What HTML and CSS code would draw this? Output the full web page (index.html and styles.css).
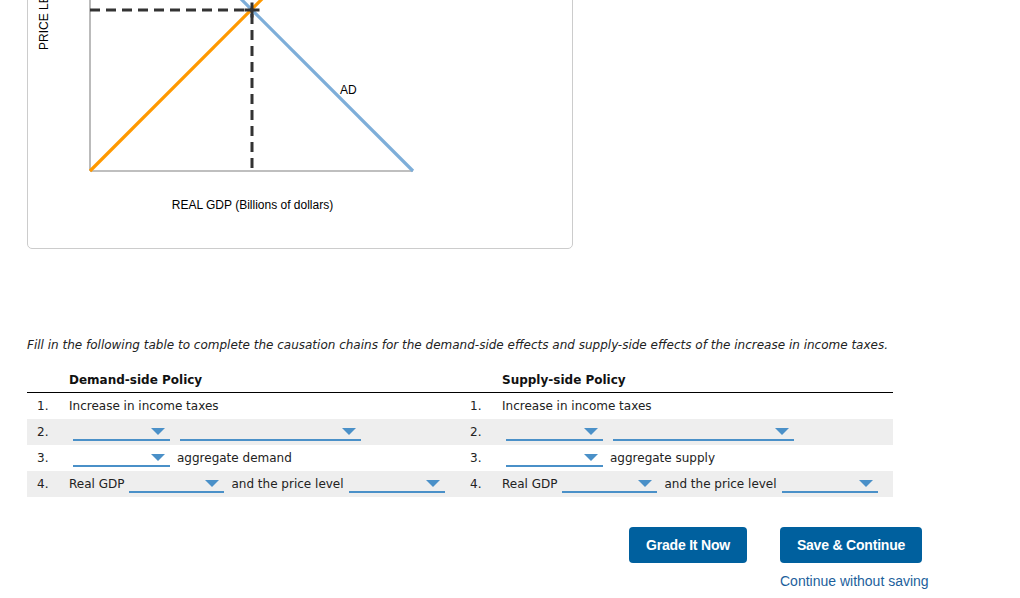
FILE: index.html
```html
<!DOCTYPE html>
<html lang="en">
<head>
<meta charset="utf-8">
<title>Causation chains</title>
<link rel="stylesheet" href="styles.css">
</head>
<body>
<div class="page">
  <div class="graph-card">
    <svg class="graph" width="544" height="287" viewBox="28 -39 544 287">
      <line class="axis" x1="90" y1="-39" x2="90" y2="171"/>
      <line class="axis" x1="90" y1="171" x2="413" y2="171"/>
      <line class="ad" x1="413" y1="171" x2="203" y2="-39"/>
      <line class="as" x1="90" y1="171" x2="300" y2="-39"/>
      <line class="dash" x1="90" y1="10" x2="252" y2="10"/>
      <line class="dash" x1="252" y1="14" x2="252" y2="171"/>
      <path class="marker" d="M244.5 10 H259.5 M252 2.5 V17.5"/>
      <text class="label" x="340" y="94">AD</text>
      <text class="label" x="252.5" y="209" text-anchor="middle">REAL GDP (Billions of dollars)</text>
      <text class="label" transform="translate(48,50) rotate(-90)">PRICE LEVEL</text>
    </svg>
  </div>

  <p class="instructions">Fill in the following table to complete the causation chains for the demand-side effects and supply-side effects of the increase in income taxes.</p>

  <table class="chains">
    <thead>
      <tr>
        <th class="num"></th>
        <th class="body">Demand-side Policy</th>
        <th class="num"></th>
        <th class="body">Supply-side Policy</th>
      </tr>
    </thead>
    <tbody>
      <tr>
        <td class="num">1.</td>
        <td class="body"><div class="cell">Increase in income taxes</div></td>
        <td class="num">1.</td>
        <td class="body"><div class="cell">Increase in income taxes</div></td>
      </tr>
      <tr class="alt">
        <td class="num">2.</td>
        <td class="body"><div class="cell"><span class="select w97 lead"></span><span class="select w181"></span></div></td>
        <td class="num">2.</td>
        <td class="body"><div class="cell"><span class="select w97 lead"></span><span class="select w181"></span></div></td>
      </tr>
      <tr>
        <td class="num">3.</td>
        <td class="body"><div class="cell"><span class="select w97 lead"></span><span class="txt after">aggregate demand</span></div></td>
        <td class="num">3.</td>
        <td class="body"><div class="cell"><span class="select w97 lead"></span><span class="txt after">aggregate supply</span></div></td>
      </tr>
      <tr class="alt">
        <td class="num">4.</td>
        <td class="body"><div class="cell"><span class="txt">Real GDP</span><span class="select w95 mid"></span><span class="txt after">and the price level</span><span class="select w96 mid"></span></div></td>
        <td class="num">4.</td>
        <td class="body"><div class="cell"><span class="txt">Real GDP</span><span class="select w95 mid"></span><span class="txt after">and the price level</span><span class="select w96 mid"></span></div></td>
      </tr>
    </tbody>
  </table>

  <div class="actions">
    <button class="btn" type="button">Grade It Now</button>
    <div class="save-group">
      <button class="btn btn-wide" type="button">Save &amp; Continue</button>
      <a class="skip" href="#">Continue without saving</a>
    </div>
  </div>
</div>
</body>
</html>
```

FILE: styles.css
```css
html, body {
  margin: 0;
  padding: 0;
  background: #ffffff;
  overflow: hidden;
}

body {
  font-family: "DejaVu Sans", Verdana, sans-serif;
  color: #222222;
}

.page {
  padding: 0 0 0 27px;
  width: 993px;
}

.graph-card {
  width: 544px;
  margin-top: -40px;
  border: 1px solid #cccccc;
  border-radius: 5px;
  background: #ffffff;
}

.graph {
  display: block;
}

.axis {
  stroke: #aaaaaa;
  stroke-width: 1.6;
}

.as {
  stroke: #ff9900;
  stroke-width: 3.2;
}

.ad {
  stroke: #7eaed9;
  stroke-width: 3.2;
}

.dash {
  stroke: #333333;
  stroke-width: 3;
  stroke-dasharray: 10 6;
}

.marker {
  stroke: #333333;
  stroke-width: 3;
  fill: none;
}

.label {
  font-family: "Liberation Sans", Arial, sans-serif;
  font-size: 12px;
  fill: #000000;
}

.instructions {
  margin: 88px 0 0 0;
  font-size: 12px;
  line-height: 16px;
  font-style: italic;
  color: #222222;
}

.chains {
  margin-top: 15px;
  width: 866px;
  border-collapse: collapse;
  border-spacing: 0;
  font-size: 12px;
  table-layout: fixed;
}

.chains th {
  text-align: left;
  font-weight: bold;
  height: 24px;
  padding: 0;
  line-height: 16px;
  border-bottom: 1px solid #000000;
  color: #111111;
}

.chains td {
  padding: 0;
  height: 26px;
}

.chains .num {
  width: 42px;
  padding-left: 10px;
  box-sizing: border-box;
}

.chains .body {
  width: 391px;
}

.chains .alt td {
  background: #eeeeee;
}

.cell {
  display: flex;
  align-items: center;
  height: 26px;
}

.txt {
  white-space: nowrap;
}

.after {
  margin-left: 7px;
}

.select {
  position: relative;
  display: inline-block;
  height: 18px;
  border-bottom: 2px solid #4a90c8;
  margin-bottom: 2px;
  flex: none;
}

.select::after {
  content: "";
  position: absolute;
  right: 5px;
  top: 7px;
  width: 0;
  height: 0;
  border-left: 7px solid transparent;
  border-right: 7px solid transparent;
  border-top: 7px solid #4a90c8;
}

.select.lead {
  margin-left: 4px;
}

.select.lead + .select {
  margin-left: 10px;
}

.select.mid {
  margin-left: 5px;
}

.w97 { width: 97px; }
.w181 { width: 181px; }
.w95 { width: 95px; }
.w96 { width: 96px; }

.actions {
  display: flex;
  justify-content: flex-end;
  align-items: flex-start;
  gap: 33px;
  margin-top: 30px;
  padding-right: 92px;
}

.btn {
  height: 36px;
  padding: 0 12px;
  width: 118px;
  border: none;
  border-radius: 4px;
  background: #00609e;
  color: #ffffff;
  font-family: "Liberation Sans", Arial, sans-serif;
  font-weight: bold;
  font-size: 14px;
  letter-spacing: -0.2px;
  cursor: pointer;
}

.btn-wide {
  width: 142px;
}

.save-group {
  display: flex;
  flex-direction: column;
  align-items: flex-start;
  width: 148px;
}

.skip {
  margin-top: 10px;
  font-family: "Liberation Sans", Arial, sans-serif;
  font-size: 14px;
  color: #1d5f9c;
  text-decoration: none;
  white-space: nowrap;
}
```
